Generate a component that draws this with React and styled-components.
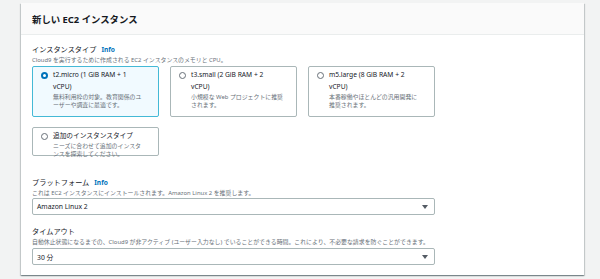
import React from 'react';
import styled, { createGlobalStyle } from 'styled-components';

const GlobalStyle = createGlobalStyle`
  body {
    margin: 0;
    background: #f2f3f3;
    font-family: "Noto Sans", "Noto Sans CJK JP", sans-serif;
    color: #16191f;
  }
`;

const Page = styled.div`
  width: 600px;
  height: 279px;
  padding: 3px 16px 0 21px;
  box-sizing: border-box;
  overflow: hidden;
`;

const Panel = styled.div`
  width: 563px;
  height: 272px;
  background: #fff;
  box-shadow: 0 1px 1px 0 rgba(0, 28, 36, 0.3), 1px 1px 1px 0 rgba(0, 28, 36, 0.15),
    -1px 1px 1px 0 rgba(0, 28, 36, 0.15);
  display: flex;
  flex-direction: column;
`;

const PanelHeader = styled.div`
  height: 32px;
  background: #fafafa;
  border-bottom: 1px solid #eaeded;
  box-sizing: border-box;
  display: flex;
  align-items: center;
  padding-left: 11px;
  font-size: 9.4px;
  font-weight: 700;
`;

const PanelBody = styled.div`
  padding: 8px 11px 0 11px;
  display: flex;
  flex-direction: column;
`;

const Field = styled.div`
  display: flex;
  flex-direction: column;
  margin-top: ${(p) => p.$top || 0}px;
`;

const Label = styled.div`
  font-size: 7.2px;
  line-height: 12px;
  height: 12px;
  color: #16191f;
`;

const Info = styled.span`
  color: #0073bb;
  font-weight: 700;
  margin-left: 5px;
  font-size: 6.6px;
`;

const Hint = styled.div`
  font-size: 5.9px;
  line-height: 10px;
  height: 10px;
  color: #687078;
  white-space: nowrap;
`;

const TileGrid = styled.div`
  display: grid;
  grid-template-columns: repeat(3, 127px);
  column-gap: 11px;
  row-gap: 10px;
  margin-top: 1px;
  width: 403px;
`;

const Tile = styled.div`
  border: 1px solid ${(p) => (p.$selected ? '#44b9d6' : '#aab7b8')};
  background: ${(p) => (p.$selected ? '#f1faff' : '#fff')};
  border-radius: 2px;
  box-sizing: border-box;
  height: ${(p) => p.$h}px;
  padding: 2px 6px 0 8px;
  display: flex;
  align-items: flex-start;
  gap: 5px;
`;

const Radio = styled.span`
  flex: none;
  width: 7px;
  height: 7px;
  margin-top: 3px;
  border-radius: 50%;
  box-sizing: border-box;
  border: ${(p) => (p.$checked ? '2px solid #0073bb' : '1px solid #687078')};
  background: #fff;
`;

const TileText = styled.div`
  display: flex;
  flex-direction: column;
`;

const TileTitle = styled.div`
  font-size: 6.7px;
  line-height: 12px;
  color: #16191f;
`;

const TileDesc = styled.div`
  font-size: 5.9px;
  line-height: 8px;
  color: #687078;
`;

const Select = styled.div`
  width: 403px;
  height: 17px;
  box-sizing: border-box;
  border: 1px solid #aab7b8;
  border-radius: 2px;
  display: flex;
  align-items: center;
  justify-content: space-between;
  padding: 0 6px 0 4px;
  font-size: 6.8px;
  color: #16191f;
`;

const Caret = styled.span`
  width: 0;
  height: 0;
  border-left: 3px solid transparent;
  border-right: 3px solid transparent;
  border-top: 4px solid #545b64;
`;

const tiles = [
  {
    title: ['t2.micro (1 GiB RAM + 1', 'vCPU)'],
    desc: ['無料利用枠の対象。教育関係のユ', 'ーザーや調査に最適です。'],
    selected: true,
    h: 51,
  },
  {
    title: ['t3.small (2 GiB RAM + 2', 'vCPU)'],
    desc: ['小規模な Web プロジェクトに推奨', 'されます。'],
    h: 51,
  },
  {
    title: ['m5.large (8 GiB RAM + 2', 'vCPU)'],
    desc: ['本番稼働やほとんどの汎用開発に', '推奨されます。'],
    h: 51,
  },
  {
    title: ['追加のインスタンスタイプ'],
    desc: ['ニーズに合わせて追加のインスタ', 'ンスを探索してください。'],
    h: 29,
  },
];

const App = () => {
  return (
    <Page>
      <GlobalStyle />
      <Panel>
        <PanelHeader>新しい EC2 インスタンス</PanelHeader>
        <PanelBody>
          <Field>
            <Label>
              インスタンスタイプ<Info>Info</Info>
            </Label>
            <Hint>Cloud9 を実行するために作成される EC2 インスタンスのメモリと CPU。</Hint>
            <TileGrid>
              {tiles.map((t) => (
                <Tile key={t.title[0]} $selected={t.selected} $h={t.h}>
                  <Radio $checked={t.selected} />
                  <TileText>
                    {t.title.map((line) => (
                      <TileTitle key={line}>{line}</TileTitle>
                    ))}
                    {t.desc.map((line) => (
                      <TileDesc key={line}>{line}</TileDesc>
                    ))}
                  </TileText>
                </Tile>
              ))}
            </TileGrid>
          </Field>
          <Field $top={20}>
            <Label>
              プラットフォーム<Info>Info</Info>
            </Label>
            <Hint>これは EC2 インスタンスにインストールされます。Amazon Linux 2 を推奨します。</Hint>
            <Select>
              <span>Amazon Linux 2</span>
              <Caret />
            </Select>
          </Field>
          <Field $top={10}>
            <Label>タイムアウト</Label>
            <Hint>
              自動休止状態になるまでの、Cloud9 が非アクティブ (ユーザー入力なし) でいることができる時間。これにより、不必要な請求を防ぐことができます。
            </Hint>
            <Select style={{ marginTop: 1 }}>
              <span>30 分</span>
              <Caret />
            </Select>
          </Field>
        </PanelBody>
      </Panel>
    </Page>
  );
};

export default App;
